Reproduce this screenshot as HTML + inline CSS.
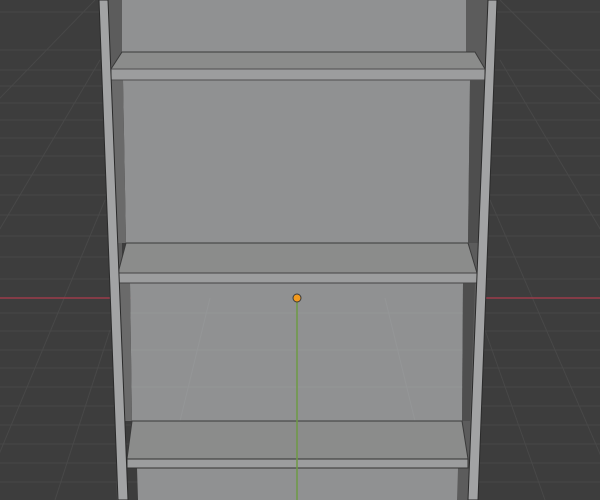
<!DOCTYPE html>
<html><head><style>html,body{margin:0;padding:0;background:#3d3d3d;width:600px;height:500px;overflow:hidden}</style></head>
<body>
<svg width="600" height="500" viewBox="0 0 600 500" xmlns="http://www.w3.org/2000/svg">
<rect width="600" height="500" fill="#3d3d3d"/>
<g stroke="#484848" stroke-width="1">
<line x1="0" y1="12" x2="600" y2="12"/><line x1="0" y1="50" x2="600" y2="50"/>
<line x1="0" y1="70" x2="600" y2="70"/><line x1="0" y1="86" x2="600" y2="86"/>
<line x1="0" y1="103" x2="600" y2="103"/><line x1="0" y1="120" x2="600" y2="120"/>
<line x1="0" y1="138" x2="600" y2="138"/><line x1="0" y1="156" x2="600" y2="156"/>
<line x1="0" y1="175" x2="600" y2="175"/><line x1="0" y1="195" x2="600" y2="195"/>
<line x1="0" y1="215" x2="600" y2="215"/><line x1="0" y1="236" x2="600" y2="236"/>
<line x1="0" y1="257" x2="600" y2="257"/><line x1="0" y1="279" x2="600" y2="279"/>
<line x1="0" y1="313" x2="600" y2="313"/><line x1="0" y1="331" x2="600" y2="331"/>
<line x1="0" y1="350" x2="600" y2="350"/><line x1="0" y1="368" x2="600" y2="368"/>
<line x1="0" y1="387" x2="600" y2="387"/><line x1="0" y1="406" x2="600" y2="406"/>
<line x1="0" y1="425" x2="600" y2="425"/><line x1="0" y1="444" x2="600" y2="444"/>
<line x1="0" y1="463" x2="600" y2="463"/><line x1="0" y1="482" x2="600" y2="482"/>
<line x1="95" y1="0" x2="-60" y2="160"/><line x1="100" y1="60" x2="-60" y2="330"/>
<line x1="105" y1="200" x2="-20" y2="500"/><line x1="110" y1="330" x2="55" y2="500"/>
<line x1="500" y1="0" x2="660" y2="160"/><line x1="500" y1="60" x2="660" y2="330"/>
<line x1="490" y1="200" x2="620" y2="500"/><line x1="485" y1="330" x2="545" y2="500"/>
</g>
<line x1="0" y1="298" x2="600" y2="298" stroke="#9b3d4b" stroke-width="1.5"/>
<!-- inner side walls -->
<polygon points="107,0 122,0 122,500 117,500" fill="#5c5c5c"/>
<polygon points="466,0 488,0 470,500 455,500" fill="#5c5c5c"/>
<!-- back panels -->
<polygon points="122,0 466,0 466,52 122,52" fill="#909192"/>
<polygon points="123,80 470,80 468,243 126,243" fill="#909192"/>
<polygon points="130,283 463,283 462,421 132,421" fill="#909192"/>
<polygon points="137,468 458,468 457,500 138,500" fill="#909192"/>
<g stroke="#989a9b" stroke-width="1" opacity="0.6">
<line x1="130" y1="313" x2="463" y2="313"/><line x1="130" y1="350" x2="463" y2="350"/><line x1="130" y1="387" x2="463" y2="387"/>
<line x1="210" y1="298" x2="180" y2="421"/><line x1="385" y1="298" x2="415" y2="421"/>
</g>
<!-- side wall darker inner shading -->
<polygon points="108,80 123,80 126,243 112,243" fill="#6a6a6a"/>
<polygon points="113,283 130,283 132,421 117,421" fill="#6a6a6a"/>
<polygon points="470,80 485,80 478,243 468,243" fill="#4e4e4e"/>
<polygon points="463,283 475,283 470,421 462,421" fill="#4e4e4e"/>
<!-- shelves -->
<polygon points="122,52 475,52 485,69 111,69" fill="#8b8c8b" stroke="#3a3a3a" stroke-width="1"/>
<rect x="111" y="69" width="374" height="11" fill="#9c9d9e" stroke="#505050" stroke-width="1"/>
<polygon points="126,243 468,243 477,273 118,273" fill="#8b8c8b" stroke="#3a3a3a" stroke-width="1"/>
<rect x="118" y="273" width="359" height="10" fill="#9c9d9e" stroke="#444" stroke-width="1"/>
<polygon points="132,421 462,421 468,459 127,459" fill="#8b8c8b" stroke="#3a3a3a" stroke-width="1"/>
<rect x="127" y="459" width="341" height="9" fill="#9c9d9e" stroke="#333" stroke-width="1"/>
<line x1="297" y1="298" x2="297" y2="500" stroke="#6e9a45" stroke-width="1.5"/>
<!-- posts -->
<polygon points="99,0 108,0 128,500 118,500" fill="#a2a3a4" stroke="#2a2a2a" stroke-width="1"/>
<polygon points="488,0 497,0 478,500 468,500" fill="#a2a3a4" stroke="#2a2a2a" stroke-width="1"/>
<circle cx="297" cy="298" r="4" fill="#f39a1e" stroke="#3a3a3a" stroke-width="1"/>
</svg>
</body></html>
